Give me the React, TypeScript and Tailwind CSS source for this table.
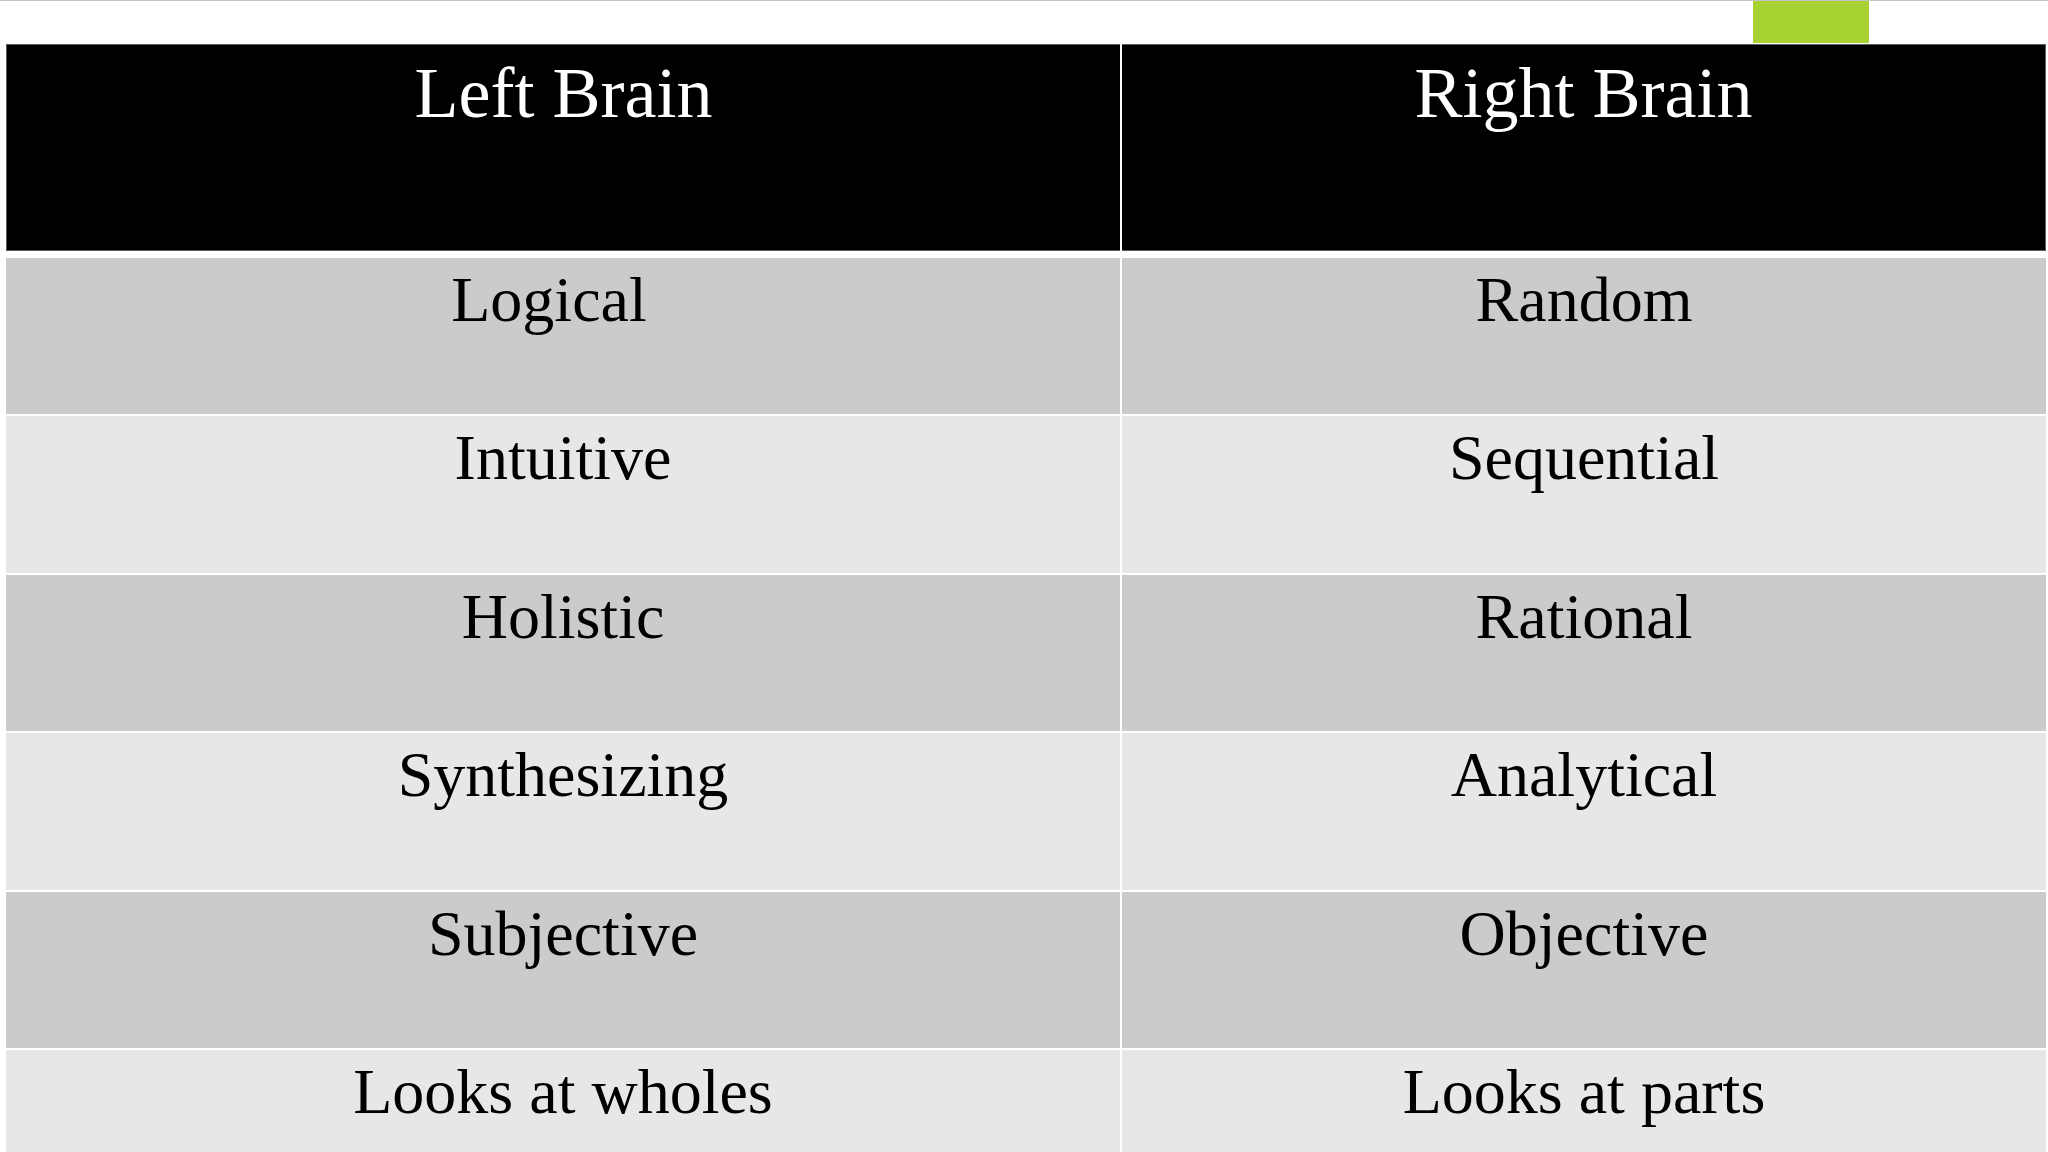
const rows: [string, string][] = [
  ["Logical", "Random"],
  ["Intuitive", "Sequential"],
  ["Holistic", "Rational"],
  ["Synthesizing", "Analytical"],
  ["Subjective", "Objective"],
  ["Looks at wholes", "Looks at parts"],
];

export default function App() {
  return (
    <div
      className="w-[2048px] h-[1152px] overflow-hidden bg-white border-t border-[#c4c4c4]"
      style={{ fontFamily: '"Liberation Serif", "Times New Roman", serif' }}
    >
      {/* top strip with accent tab */}
      <div className="h-[43px] flex">
        <div className="ml-[1753px] w-[116px] h-[42px] bg-[#a8d232]" />
      </div>

      <div className="ml-[6px] w-[2040px] flex flex-col">
        {/* header */}
        <div className="flex gap-[2px] h-[207px]">
          <div className="w-[1114px] bg-black border-t border-l border-b border-[#5c5c5c] pt-[12px] text-center text-white text-[72px] leading-none">
            Left Brain
          </div>
          <div className="flex-1 bg-black border-t border-r border-b border-[#5c5c5c] pt-[12px] text-center text-white text-[72px] leading-none">
            Right Brain
          </div>
        </div>

        <div className="flex flex-col gap-[2px] mt-[7px]">
          {rows.map(([l, r], i) => {
            const bg = i % 2 === 0 ? "bg-[#cbcbcb]" : "bg-[#e7e7e7]";
            return (
              <div key={l} className="flex gap-[2px] h-[156.4px]">
                <div
                  className={`w-[1114px] ${bg} pt-[10px] text-center text-black text-[64px] leading-none ${
                    i === 0 ? "pr-[28px]" : ""
                  }`}
                >
                  {l}
                </div>
                <div className={`flex-1 ${bg} pt-[10px] text-center text-black text-[64px] leading-none`}>
                  {r}
                </div>
              </div>
            );
          })}
        </div>
      </div>
    </div>
  );
}
